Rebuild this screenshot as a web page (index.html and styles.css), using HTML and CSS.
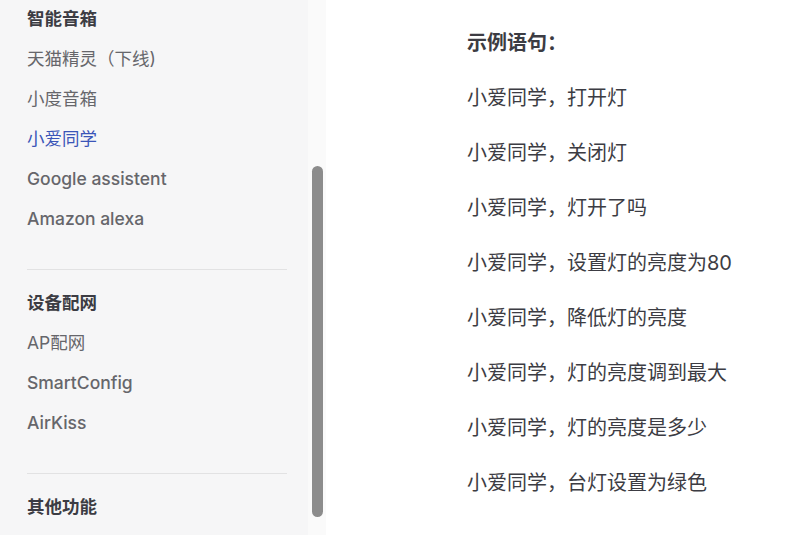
FILE: index.html
```html
<!DOCTYPE html>
<html lang="zh-CN">
<head>
<meta charset="utf-8">
<title>文档</title>
<link rel="stylesheet" href="styles.css">
</head>
<body>
<div class="layout">
  <aside class="sidebar">
    <div class="nav">
      <section class="group">
        <div class="group-title">智能音箱</div>
        <a class="item">天猫精灵（下线)</a>
        <a class="item">小度音箱</a>
        <a class="item active">小爱同学</a>
        <a class="item latin">Google assistent</a>
        <a class="item latin">Amazon alexa</a>
      </section>
      <section class="group">
        <div class="group-title">设备配网</div>
        <a class="item">AP配网</a>
        <a class="item latin">SmartConfig</a>
        <a class="item latin">AirKiss</a>
      </section>
      <section class="group">
        <div class="group-title">其他功能</div>
      </section>
    </div>
  </aside>
  <div class="scrolltrack"><div class="thumb"></div></div>
  <main class="content">
    <p class="strong">示例语句：</p>
    <p>小爱同学，打开灯</p>
    <p>小爱同学，关闭灯</p>
    <p>小爱同学，灯开了吗</p>
    <p>小爱同学，设置灯的亮度为80</p>
    <p>小爱同学，降低灯的亮度</p>
    <p>小爱同学，灯的亮度调到最大</p>
    <p>小爱同学，灯的亮度是多少</p>
    <p>小爱同学，台灯设置为绿色</p>
  </main>
</div>
</body>
</html>
```

FILE: styles.css
```css
html, body {
  margin: 0;
  padding: 0;
  height: 100%;
  overflow: hidden;
  background: #ffffff;
  font-family: Inter, "Noto Sans CJK SC", sans-serif;
}

.layout {
  display: flex;
  height: 535px;
}

.sidebar {
  width: 308px;
  flex: none;
  background: #f6f6f7;
  overflow: hidden;
}

.nav {
  margin-top: -1px;
  padding: 0 21px 0 27px;
}

.group {
  display: flex;
  flex-direction: column;
  border-bottom: 1px solid #e2e2e3;
  padding-bottom: 30px;
  margin-bottom: 13px;
}

.group:last-child {
  border-bottom: none;
}

.group-title {
  font-size: 17.5px;
  line-height: 40px;
  font-weight: 700;
  color: #3c3c43;
}

.item {
  font-size: 17.5px;
  line-height: 40px;
  font-weight: 400;
  color: #66666b;
  text-decoration: none;
}

.item.latin {
  font-weight: 500;
}

.item.active {
  color: #3a55b8;
}

.scrolltrack {
  width: 18px;
  flex: none;
  background: #fafafa;
  padding-top: 166px;
  box-sizing: border-box;
}

.thumb {
  width: 11px;
  height: 351px;
  margin-left: 4px;
  background: #8c8c8c;
  border-radius: 6px;
}

.content {
  flex: 1;
  padding: 26px 0 0 141px;
  color: #3c3c43;
  font-size: 20px;
}

.content p {
  margin: 0 0 20px;
  line-height: 35px;
}

.content p.strong {
  font-weight: 700;
}
```
